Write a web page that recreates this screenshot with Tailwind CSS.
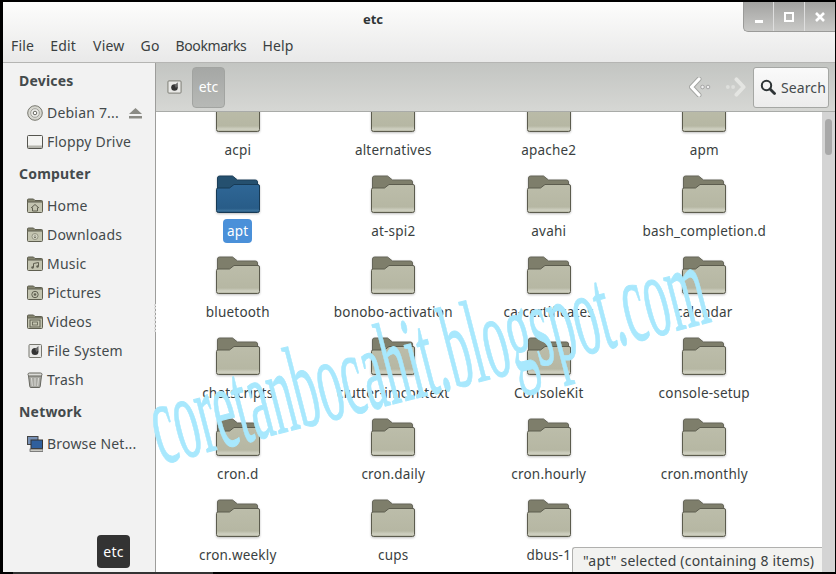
<!DOCTYPE html>
<html>
<head>
<meta charset="utf-8">
<script src="https://cdn.jsdelivr.net/npm/@tailwindcss/browser@4"></script>
</head>
<body class="m-0 bg-black">
<svg width="0" height="0" class="absolute">
  <defs>
    <linearGradient id="f" x1="0" y1="0" x2="0" y2="1"><stop offset="0" stop-color="#bcbdaa"/><stop offset=".8" stop-color="#b6b7a3"/><stop offset=".92" stop-color="#d0d1c2"/><stop offset="1" stop-color="#aeaf9b"/></linearGradient>
    <linearGradient id="b" x1="0" y1="0" x2="0" y2="1"><stop offset="0" stop-color="#2f6796"/><stop offset=".85" stop-color="#285c88"/><stop offset=".93" stop-color="#3a7099"/><stop offset="1" stop-color="#245279"/></linearGradient>
    <symbol id="folder" viewBox="0 0 44 39">
      <path d="M1.5 3a2 2 0 0 1 2-2h13l5 4h18a2 2 0 0 1 2 2v8H1.5z" fill="#7e7e6b" stroke="#66665a"/>
      <path d="M.5 14.5a1.500 1.500 0 0 1 1.500-1.500h11.500l4.500-3.500h24a1.500 1.500 0 0 1 1.500 1.500v24.500a2 2 0 0 1-2 2H2.500a2 2 0 0 1-2-2z" fill="url(#f)" stroke="#5c5c4e"/>
    </symbol>
    <symbol id="folderb" viewBox="0 0 44 39">
      <path d="M1.500 3a2 2 0 0 1 2-2h13l5 4h18a2 2 0 0 1 2 2v8H1.500z" fill="#25506f" stroke="#1c3f5a"/>
      <path d="M.5 14.500a1.500 1.500 0 0 1 1.500-1.500h11.500l4.500-3.500h24a1.500 1.500 0 0 1 1.500 1.500v24.500a2 2 0 0 1-2 2H2.500a2 2 0 0 1-2-2z" fill="url(#b)" stroke="#173a55"/>
    </symbol>
    <symbol id="mini" viewBox="0 0 16 15">
      <path d="M.5 2a1 1 0 0 1 1-1h5l1.500 1.500h6.500a1 1 0 0 1 1 1v2H.500z" fill="#85856f" stroke="#5f5f50"/>
      <rect x=".5" y="4" width="15" height="10.500" rx="1" fill="#c3c4b0" stroke="#5f5f50"/>
    </symbol>
  </defs>
</svg>

<div class="relative w-[836px] h-[574px] overflow-hidden bg-black pt-[2px] pl-[3px] pr-[1px] pb-[2px] flex flex-col font-['Noto_Sans','Open_Sans',sans-serif] text-[#2e3436]">

  <!-- title + menu -->
  <header class="relative h-[61px] shrink-0 bg-gradient-to-b from-[#fdfdfc] to-[#e9e9e9] border-b border-[#b5b5b3]">
    <div class="text-center pt-[8px] pr-[92px] text-[13px] leading-[18px] font-bold text-[#2e3436]">etc</div>
    <div class="absolute top-0 right-0 w-[92px] h-[30px] flex rounded-bl-[5px] bg-gradient-to-b from-[#a3a3a1] to-[#c9c9c7] border-l border-b border-[#9b9b99] text-white">
      <div class="w-[30px] flex items-end justify-center pb-[8px] border-r border-[#dedede]"><span class="block w-[8px] h-[3px] bg-white"></span></div>
      <div class="w-[31px] flex items-center justify-center border-r border-[#dedede]"><span class="block w-[10px] h-[10px] border-[2.500px] border-white"></span></div>
      <div class="flex-1 flex items-center justify-center">
        <svg width="10" height="10" viewBox="0 0 10 10"><path d="M1 1l8 8M9 1l-8 8" stroke="#fff" stroke-width="2.600"/></svg>
      </div>
    </div>
    <nav class="flex h-[24px] mt-[6px] pl-[8px] gap-[16px] text-[14px] leading-[24px] text-[#3a3f41] tracking-[0.2px]">
      <span>File</span><span>Edit</span><span class="ml-[1px]">View</span><span>Go</span><span class="tracking-[-0.4px]">Bookmarks</span><span>Help</span>
    </nav>
  </header>

  <div class="flex-1 flex min-h-0">
    <!-- sidebar -->
    <aside class="relative w-[153px] shrink-0 bg-[#f2f2f2] border-r border-[#9d9d9b] text-[14px] tracking-[0.2px] pt-[8px]">
      <h3 class="h-[20px] leading-[20px] pl-[16px] font-bold text-[#444a4c]">Devices</h3>
      <ul class="mt-[7px] mb-[8px] flex flex-col">
        <li class="h-[29px] flex items-center pl-[24px] gap-[4px] text-[#444a4c]">
          <svg class="w-[16px] h-[16px] shrink-0" viewBox="0 0 16 16"><circle cx="8" cy="8" r="7.300" fill="#d7d7d0" stroke="#77776e"/><circle cx="8" cy="8" r="4.300" fill="#eeeeea" stroke="#a0a09a"/><circle cx="8" cy="8" r="1.800" fill="#fff" stroke="#66665f"/></svg>
          <span class="w-[70px] whitespace-nowrap">Debian 7...</span>
          <svg class="w-[13px] h-[12px] ml-[8px] shrink-0" viewBox="0 0 13 12"><path d="M6.500 1L13 7H0z" fill="#8b8b85"/><rect y="9" width="13" height="2.500" fill="#8b8b85"/></svg>
        </li>
        <li class="h-[29px] flex items-center pl-[24px] gap-[4px] text-[#444a4c]">
          <svg class="w-[16px] h-[14px] shrink-0" viewBox="0 0 16 14"><rect x=".5" y=".5" width="15" height="13" rx="1" fill="#f3f3f1" stroke="#55554f"/><rect x="1" y="10.500" width="14" height="2.500" fill="#b5b5ad"/></svg>
          <span>Floppy Drive</span>
        </li>
      </ul>
      <h3 class="h-[20px] leading-[20px] pl-[16px] font-bold text-[#444a4c]">Computer</h3>
      <ul class="mt-[7px] mb-[8px] flex flex-col text-[#444a4c]">
        <li class="h-[29px] flex items-center pl-[24px] gap-[4px]"><svg class="w-[16px] h-[15px]"><use href="#mini"/><path d="M4 10l4-3.500 4 3.500M5.500 9.500v3.500h5V9.500" fill="none" stroke="#5f5f50"/></svg><span>Home</span></li>
        <li class="h-[29px] flex items-center pl-[24px] gap-[4px]"><svg class="w-[16px] h-[15px]"><use href="#mini"/><circle cx="8" cy="9.500" r="3" fill="#d8d9c9" stroke="#7b7b6a" stroke-width=".7"/><path d="M8 7.800v3M6.800 9.800L8 11l1.200-1.200" fill="none" stroke="#5f5f50" stroke-width=".7"/></svg><span>Downloads</span></li>
        <li class="h-[29px] flex items-center pl-[24px] gap-[4px]"><svg class="w-[16px] h-[15px]"><use href="#mini"/><path d="M6.500 11.500V7.500l5-1v4" fill="none" stroke="#5f5f50"/><circle cx="5.500" cy="11.500" r="1.200" fill="#5f5f50"/><circle cx="10.500" cy="10.500" r="1.200" fill="#5f5f50"/></svg><span>Music</span></li>
        <li class="h-[29px] flex items-center pl-[24px] gap-[4px]"><svg class="w-[16px] h-[15px]"><use href="#mini"/><circle cx="8" cy="9.500" r="3.200" fill="none" stroke="#5f5f50"/><circle cx="8" cy="9.500" r="1.300" fill="#5f5f50"/></svg><span>Pictures</span></li>
        <li class="h-[29px] flex items-center pl-[24px] gap-[4px]"><svg class="w-[16px] h-[15px]"><use href="#mini"/><rect x="3" y="6" width="10" height="7" fill="none" stroke="#5f5f50"/><rect x="5.500" y="8" width="5" height="3" fill="none" stroke="#5f5f50" stroke-width=".8"/></svg><span>Videos</span></li>
        <li class="h-[29px] flex items-center pl-[24px] gap-[4px]"><svg class="w-[16px] h-[16px]" viewBox="0 0 16 16"><rect x="2" y="1.500" width="12.500" height="13" rx="1" fill="#e8e8e6" stroke="#77776f"/><circle cx="8" cy="8.500" r="3.500" fill="#333"/><path d="M8 6l3.500-3v4L9.500 9z" fill="#666"/></svg><span>File System</span></li>
        <li class="h-[29px] flex items-center pl-[24px] gap-[4px]"><svg class="w-[16px] h-[16px]" viewBox="0 0 16 16"><path d="M1.500 3.500h13l-1.300 11a1 1 0 0 1-1 1H3.800a1 1 0 0 1-1-1z" fill="#a8a8a2" stroke="#66665f"/><rect x="1" y="1" width="14" height="3" rx="1.500" fill="#dcdcd8" stroke="#66665f"/><path d="M4.500 6l.8 8M8 6v8M11.500 6l-.8 8" stroke="#dcdcd8"/></svg><span>Trash</span></li>
      </ul>
      <h3 class="h-[20px] leading-[20px] pl-[16px] font-bold text-[#444a4c]">Network</h3>
      <ul class="mt-[7px] flex flex-col text-[#444a4c]">
        <li class="h-[29px] flex items-center pl-[24px] gap-[4px]"><svg class="w-[16px] h-[16px] shrink-0" viewBox="0 0 16 16"><rect x=".5" y=".5" width="10.500" height="8" fill="#7790b5" stroke="#444"/><rect x="4" y="4" width="11.500" height="8.500" fill="#2f5f9c" stroke="#333"/><rect x="3" y="13" width="13" height="2.500" fill="#c9c9c3" stroke="#555" stroke-width=".7"/></svg><span>Browse Net...</span></li>
      </ul>
      <div class="absolute left-[94px] bottom-[4px] w-[33px] h-[33px] rounded-[4px] bg-[#333333] text-white text-[14px] leading-[33px] text-center">etc</div>
      <div class="absolute right-[-1px] top-[241px] w-[2px] h-[28px] border-l-2 border-dotted border-[#dcdcdc]"></div>
    </aside>

    <!-- main -->
    <main class="relative flex-1 min-w-0 flex flex-col">
      <div class="h-[49px] shrink-0 relative flex items-center pl-[11px] pr-[6px] bg-gradient-to-b from-[#c3c5c2] to-[#d6d7d4] border-b border-[#a9aba8]">
        <svg class="w-[15px] h-[16px] shrink-0" viewBox="0 0 16 16"><rect x="1" y="1.500" width="14" height="13" rx="1" fill="#e8e8e6" stroke="#77776f"/><circle cx="8" cy="8.500" r="3.500" fill="#333"/><path d="M8 6l3.500-3v4L9.500 9z" fill="#666"/></svg>
        <button class="ml-[10px] w-[33px] h-[41px] rounded-[4px] bg-gradient-to-b from-[#a5a7a5] to-[#b7b9b6] border border-[#a2a4a1] text-white text-[14px] leading-[38px]">etc</button>
        <div class="ml-auto flex items-center">
          <svg class="w-[23px] h-[20px]" viewBox="0 0 23 20"><path d="M10 2L2.500 10l7.500 8" fill="none" stroke="#a3a5a2" stroke-width="5" stroke-linejoin="round" stroke-linecap="round"/><path d="M10 2L2.500 10l7.500 8" fill="none" stroke="#fff" stroke-width="3.200" stroke-linejoin="round" stroke-linecap="round"/><circle cx="13.500" cy="10" r="1.800" fill="#eee" stroke="#999" stroke-width=".8"/><circle cx="19" cy="10" r="1.800" fill="#eee" stroke="#999" stroke-width=".8"/></svg>
          <svg class="w-[22px] h-[20px] ml-[12px]" viewBox="0 0 23 20"><path d="M13 2l7.500 8-7.500 8" fill="none" stroke="#e4e5e2" stroke-width="4" stroke-linejoin="round" stroke-linecap="round"/><circle cx="4" cy="10" r="2" fill="#dedfdc"/><circle cx="9.500" cy="10" r="2" fill="#dedfdc"/></svg>
          <button class="ml-[7px] w-[76px] h-[41px] rounded-[3px] bg-gradient-to-b from-[#fafafa] to-[#ececec] border border-[#a5a7a4] flex items-center pl-[6px] gap-[5px] text-[14px] tracking-[0.1px] text-[#444a4c]">
            <svg class="w-[16px] h-[16px] shrink-0" viewBox="0 0 16 16"><circle cx="6.500" cy="6.500" r="4.700" fill="none" stroke="#2e3436" stroke-width="2"/><path d="M10 10l4.500 4.500" stroke="#2e3436" stroke-width="2.800" stroke-linecap="round"/></svg>
            Search
          </button>
        </div>
      </div>

      <div class="relative flex-1 min-h-0 flex overflow-hidden bg-white">
        <div class="flex-1 min-w-0 overflow-hidden">
          <div class="mt-[-18px] pl-[4px] grid grid-cols-[repeat(4,155.500px)] auto-rows-[81px] text-[13.500px] tracking-[0.2px] text-[#3a3f41] leading-[25px] text-center [&_svg]:drop-shadow-[0_1px_1px_rgba(0,0,0,0.25)]">
            <div class="flex flex-col items-center"><svg class="w-[44px] h-[39px] shrink-0"><use href="#folder"/></svg><span class="mt-[5px] h-[24px] whitespace-nowrap">acpi</span></div>
            <div class="flex flex-col items-center"><svg class="w-[44px] h-[39px] shrink-0"><use href="#folder"/></svg><span class="mt-[5px] h-[24px] whitespace-nowrap">alternatives</span></div>
            <div class="flex flex-col items-center"><svg class="w-[44px] h-[39px] shrink-0"><use href="#folder"/></svg><span class="mt-[5px] h-[24px] whitespace-nowrap">apache2</span></div>
            <div class="flex flex-col items-center"><svg class="w-[44px] h-[39px] shrink-0"><use href="#folder"/></svg><span class="mt-[5px] h-[24px] whitespace-nowrap">apm</span></div>
            <div class="flex flex-col items-center"><svg class="w-[44px] h-[39px] shrink-0"><use href="#folderb"/></svg><span class="mt-[5px] h-[24px] whitespace-nowrap px-[4px] rounded-[4px] bg-[#4a90d9] text-white">apt</span></div>
            <div class="flex flex-col items-center"><svg class="w-[44px] h-[39px] shrink-0"><use href="#folder"/></svg><span class="mt-[5px] h-[24px] whitespace-nowrap">at-spi2</span></div>
            <div class="flex flex-col items-center"><svg class="w-[44px] h-[39px] shrink-0"><use href="#folder"/></svg><span class="mt-[5px] h-[24px] whitespace-nowrap">avahi</span></div>
            <div class="flex flex-col items-center"><svg class="w-[44px] h-[39px] shrink-0"><use href="#folder"/></svg><span class="mt-[5px] h-[24px] whitespace-nowrap">bash_completion.d</span></div>
            <div class="flex flex-col items-center"><svg class="w-[44px] h-[39px] shrink-0"><use href="#folder"/></svg><span class="mt-[5px] h-[24px] whitespace-nowrap">bluetooth</span></div>
            <div class="flex flex-col items-center"><svg class="w-[44px] h-[39px] shrink-0"><use href="#folder"/></svg><span class="mt-[5px] h-[24px] whitespace-nowrap">bonobo-activation</span></div>
            <div class="flex flex-col items-center"><svg class="w-[44px] h-[39px] shrink-0"><use href="#folder"/></svg><span class="mt-[5px] h-[24px] whitespace-nowrap">ca-certificates</span></div>
            <div class="flex flex-col items-center"><svg class="w-[44px] h-[39px] shrink-0"><use href="#folder"/></svg><span class="mt-[5px] h-[24px] whitespace-nowrap">calendar</span></div>
            <div class="flex flex-col items-center"><svg class="w-[44px] h-[39px] shrink-0"><use href="#folder"/></svg><span class="mt-[5px] h-[24px] whitespace-nowrap">chatscripts</span></div>
            <div class="flex flex-col items-center"><svg class="w-[44px] h-[39px] shrink-0"><use href="#folder"/></svg><span class="mt-[5px] h-[24px] whitespace-nowrap">clutter-imcontext</span></div>
            <div class="flex flex-col items-center"><svg class="w-[44px] h-[39px] shrink-0"><use href="#folder"/></svg><span class="mt-[5px] h-[24px] whitespace-nowrap">ConsoleKit</span></div>
            <div class="flex flex-col items-center"><svg class="w-[44px] h-[39px] shrink-0"><use href="#folder"/></svg><span class="mt-[5px] h-[24px] whitespace-nowrap">console-setup</span></div>
            <div class="flex flex-col items-center"><svg class="w-[44px] h-[39px] shrink-0"><use href="#folder"/></svg><span class="mt-[5px] h-[24px] whitespace-nowrap">cron.d</span></div>
            <div class="flex flex-col items-center"><svg class="w-[44px] h-[39px] shrink-0"><use href="#folder"/></svg><span class="mt-[5px] h-[24px] whitespace-nowrap">cron.daily</span></div>
            <div class="flex flex-col items-center"><svg class="w-[44px] h-[39px] shrink-0"><use href="#folder"/></svg><span class="mt-[5px] h-[24px] whitespace-nowrap">cron.hourly</span></div>
            <div class="flex flex-col items-center"><svg class="w-[44px] h-[39px] shrink-0"><use href="#folder"/></svg><span class="mt-[5px] h-[24px] whitespace-nowrap">cron.monthly</span></div>
            <div class="flex flex-col items-center"><svg class="w-[44px] h-[39px] shrink-0"><use href="#folder"/></svg><span class="mt-[5px] h-[24px] whitespace-nowrap">cron.weekly</span></div>
            <div class="flex flex-col items-center"><svg class="w-[44px] h-[39px] shrink-0"><use href="#folder"/></svg><span class="mt-[5px] h-[24px] whitespace-nowrap">cups</span></div>
            <div class="flex flex-col items-center"><svg class="w-[44px] h-[39px] shrink-0"><use href="#folder"/></svg><span class="mt-[5px] h-[24px] whitespace-nowrap">dbus-1</span></div>
            <div class="flex flex-col items-center"><svg class="w-[44px] h-[39px] shrink-0"><use href="#folder"/></svg></div>
          </div>
        </div>
        <div class="w-[13px] shrink-0 bg-[#d4d4d4] pt-[7px] flex justify-center"><div class="w-[7px] h-[36px] rounded-full bg-[#a8a8a8]"></div></div>
        <div class="absolute right-[13px] bottom-0 w-[250px] h-[25px] bg-[#f2f2f0] border-t border-l border-[#b0b0ae] rounded-tl-[3px] pl-[10px] text-[14px] tracking-[0.2px] leading-[25px] text-[#3a3f41] whitespace-nowrap">"apt" selected (containing 8 items)</div>
      </div>
    </main>
  </div>

  <!-- watermark -->
  <div class="absolute left-[171px] top-[403px] origin-bottom-left pointer-events-none whitespace-nowrap font-['Liberation_Serif',serif] text-[#a8e8fd] [-webkit-text-stroke:0.6px_#a8e8fd] text-[74px] leading-[100px] rotate-[-14.500deg] scale-x-[0.667] scale-y-[1.600]">coretanbocahit.blogspot.com</div>
  <div class="absolute left-[13px] bottom-0 w-[200px] h-[2px] bg-[#333333]"></div>
</div>
</body>
</html>
